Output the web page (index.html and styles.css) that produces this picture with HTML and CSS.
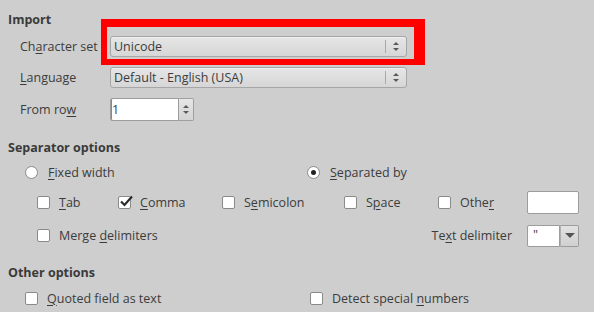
FILE: index.html
```html
<!DOCTYPE html>
<html>
<head>
<meta charset="utf-8">
<link rel="stylesheet" href="styles.css">
</head>
<body>
<div class="page">
  <div class="heading h-import">Import</div>
  <div class="frow r-charset">
    <span class="flabel">Ch<u>a</u>racter set</span>
    <div class="combo wide"><span class="ctext">Unicode</span><span class="spin"><i class="up"></i><i class="dn"></i></span></div>
    <div class="redbox"></div>
  </div>
  <div class="frow r-lang">
    <span class="flabel"><u>L</u>anguage</span>
    <div class="combo wide"><span class="ctext">Default - English (USA)</span><span class="spin"><i class="up"></i><i class="dn"></i></span></div>
  </div>
  <div class="frow r-from">
    <span class="flabel">From ro<u>w</u></span>
    <div class="spinfield"><span class="field">1</span><span class="spinbtn"><i class="up"></i><i class="dn"></i></span></div>
  </div>

  <div class="heading h-sep">Separator options</div>
  <div class="radios">
    <label class="opt"><span class="radio"></span><span><u>F</u>ixed width</span></label>
    <label class="opt"><span class="radio on"></span><span><u>S</u>eparated by</span></label>
  </div>
  <div class="checks">
    <label class="opt"><span class="box"></span><span><u>T</u>ab</span></label>
    <label class="opt"><span class="box"><svg class="tick" width="16" height="14" viewBox="0 0 16 14"><path d="M3 7.5 L6.5 11 L14 2.5" fill="none" stroke="#2b2b2b" stroke-width="2.2"/></svg></span><span><u>C</u>omma</span></label>
    <label class="opt"><span class="box"></span><span>S<u>e</u>micolon</span></label>
    <label class="opt"><span class="box"></span><span>S<u>p</u>ace</span></label>
    <label class="opt"><span class="box"></span><span>Othe<u>r</u></span></label>
    <span class="otherfield"></span>
  </div>
  <div class="merge">
    <label class="opt"><span class="box"></span><span>Merge <u>d</u>elimiters</span></label>
    <span class="tdlabel">Te<u>x</u>t delimiter</span>
    <div class="tdcombo"><span class="tdtext">"</span><span class="tdbtn"><i class="dn big"></i></span></div>
  </div>

  <div class="heading h-other">Other options</div>
  <div class="others">
    <label class="opt"><span class="box"></span><span><u>Q</u>uoted field as text</span></label>
    <label class="opt"><span class="box"></span><span>Detect special <u>n</u>umbers</span></label>
  </div>
</div>
</body>
</html>
```
FILE: styles.css
```css
* { box-sizing: border-box; }
html, body { margin: 0; padding: 0; }
body {
  background: #cecece;
  font-family: "Open Sans", "Noto Sans", sans-serif;
  font-size: 12.5px;
  color: #3c3c3c;
  width: 594px;
  height: 312px;
  overflow: hidden;
}
u { text-decoration: underline; text-underline-offset: 2px; text-decoration-thickness: 1px; }
.page { padding: 0 0 0 8px; display: flex; flex-direction: column; }
.heading { font-weight: bold; color: #3a3a3a; height: 20px; line-height: 20px; }
.h-import { margin-top: 10px; }
.h-sep { margin-top: 17px; }
.h-other { margin-top: 17px; }

.frow { position: relative; display: flex; align-items: center; padding-left: 12px; }
.flabel { width: 90px; }
.r-charset { margin-top: 6px; height: 21px; }
.r-lang { margin-top: 10px; height: 21px; }
.r-from { margin-top: 10px; height: 23px; }

.combo {
  height: 21px; display: flex; align-items: center;
  background: linear-gradient(#e6e6e6, #d6d6d6);
  border: 1px solid #a6a6a6; border-radius: 3px;
  box-shadow: inset 0 1px 0 #f0f0f0;
}
.combo.wide { width: 297px; }
.ctext { flex: 1; padding-left: 3px; }
.spin {
  width: 21px; height: 13px; border-left: 1px solid #a8a8a8;
  display: flex; flex-direction: column; align-items: center; justify-content: center; gap: 3px;
}
i.up, i.dn { display: block; width: 0; height: 0; border-left: 3px solid transparent; border-right: 3px solid transparent; }
i.up { border-bottom: 3px solid #5a5a5a; }
i.dn { border-top: 3px solid #5a5a5a; }
i.dn.big { border-left-width: 5px; border-right-width: 5px; border-top-width: 5px; border-top-color: #555; }

.redbox {
  position: absolute; left: 93px; top: -17px; width: 324px; height: 46px;
  border-style: solid; border-color: #ff0000;
  border-width: 8px 11px 6px 6px;
  pointer-events: none;
}

.spinfield { display: flex; height: 23px; }
.field {
  width: 69px; height: 23px; background: #fff; border: 1px solid #9c9c9c; border-radius: 2px 0 0 2px;
  padding-left: 1px; line-height: 21px; color: #3c3c3c;
  box-shadow: inset 1px 0 0 #e07020;
}
.spinbtn {
  width: 15px; height: 23px; background: linear-gradient(#e6e6e6, #d4d4d4);
  border: 1px solid #a0a0a0; border-left: none; border-radius: 0 2px 2px 0;
  display: flex; flex-direction: column; align-items: center; justify-content: center; gap: 3px;
}

.opt { display: flex; align-items: center; }
.radio {
  width: 13px; height: 13px; border-radius: 50%; background: #fff; border: 1px solid #8a8a8a;
  margin-right: 10px; position: relative; flex: none;
}
.radio.on::after {
  content: ""; position: absolute; left: 3px; top: 3px; width: 5px; height: 5px; border-radius: 50%; background: #222;
}
.box {
  width: 13px; height: 13px; background: #fff; border: 1px solid #8a8a8a; border-radius: 2px;
  margin-right: 9px; position: relative; flex: none;
}
.tick { position: absolute; left: -1px; top: -3px; }

.radios { display: grid; grid-template-columns: 282px 200px; padding-left: 17px; margin-top: 4px; height: 20px; align-items: center; }
.checks {
  display: grid; grid-template-columns: 81px 104px 122px 94px 89px 52px;
  padding-left: 29px; margin-top: 9px; height: 23px; align-items: center;
}
.otherfield { width: 52px; height: 23px; background: #fff; border: 1px solid #9c9c9c; border-radius: 2px; }
.merge { display: flex; align-items: center; padding-left: 29px; margin-top: 11px; height: 21px; }
.merge .opt { flex: 1; }
.tdlabel { margin-right: 15px; }
.tdcombo { display: flex; width: 52px; height: 22px; margin-right: 15px; }
.tdtext { flex: 1; background: #fff; border: 1px solid #9c9c9c; border-radius: 2px 0 0 2px; padding-left: 5px; line-height: 18px; }
.tdbtn {
  width: 19px; background: linear-gradient(#e2e2e2, #d0d0d0); border: 1px solid #9c9c9c; border-left: 1px solid #b0b0b0;
  border-radius: 0 2px 2px 0; display: flex; align-items: center; justify-content: center;
}
.others { display: grid; grid-template-columns: 285px 200px; padding-left: 17px; margin-top: 5px; height: 20px; align-items: center; }
```
